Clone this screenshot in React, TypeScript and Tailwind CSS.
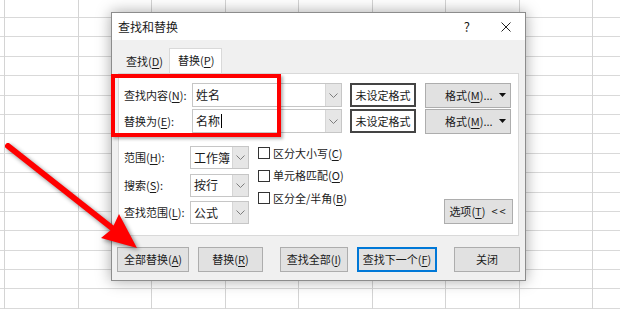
import React from 'react';

const rows = Array.from({ length: 15 }, (_, i) => i);
const cols = Array.from({ length: 8 }, (_, i) => i);

const Chevron = () => (
  <svg width="9" height="5" viewBox="0 0 9 5">
    <polyline points="0.5,0.5 4.5,4.5 8.5,0.5" fill="none" stroke="#7d7d7d" strokeWidth="1" />
  </svg>
);

const Key = ({ k }: { k: string }) => (
  <>
    (<u className="underline-offset-2">{k}</u>)
  </>
);

interface ComboProps {
  text: string;
  width: string;
  height: string;
  cursor?: boolean;
}

const Combo = ({ text, width, height, cursor }: ComboProps) => (
  <div className={`flex border border-[#c6c6c6] bg-white ${width} ${height}`}>
    <div className="flex-1 flex items-center pl-[3px] text-[12px]">
      {text}
      {cursor && <span className="ml-px w-px h-[14px] bg-black" />}
    </div>
    <div className="w-[16px] bg-[#e6e6e6] border-l border-[#d6d6d6] flex items-center justify-center">
      <Chevron />
    </div>
  </div>
);

const Btn = ({ children, className }: { children: React.ReactNode; className: string }) => (
  <div className={`h-[25px] flex items-center justify-center whitespace-nowrap border border-[#adadad] bg-[#e1e1e1] ${className}`}>
    {children}
  </div>
);

const Check = ({ children }: { children: React.ReactNode }) => (
  <div className="h-[22.5px] flex items-center whitespace-nowrap">
    <span className="w-[12px] h-[12px] border border-[#333] bg-white" />
    <span className="ml-[3px]">{children}</span>
  </div>
);

export default function App() {
  return (
    <div className="relative w-[620px] h-[309px] overflow-hidden bg-white font-['Noto_Sans_CJK_SC',sans-serif] text-[11px] leading-none text-[#1a1a1a]">
      {/* sheet grid */}
      <div className="absolute inset-0 flex flex-col">
        <div className="h-[18px] shrink-0 border-b border-[#d9d9d9]" />
        {rows.map((i) => (
          <div key={i} className="h-[19.4px] shrink-0 border-b border-[#d9d9d9]" />
        ))}
      </div>
      <div className="absolute inset-0 flex">
        <div className="w-[5px] shrink-0 border-r border-[#d4d4d4]" />
        {cols.map((i) => (
          <div key={i} className="w-[73.5px] shrink-0 border-r border-[#d4d4d4]" />
        ))}
      </div>

      {/* dialog */}
      <div className="absolute left-[111px] top-[12px] w-[415px] h-[269px] flex flex-col border border-[#8c8c8c] bg-[#f0f0f0] shadow-[0_0_14px_rgba(0,0,0,0.35)]">
        <div className="h-[27px] bg-white flex items-center pl-[6px] pr-[14px] text-[12px]">
          <span>查找和替换</span>
          <span className="ml-auto text-[13px]">?</span>
          <svg className="ml-[31px]" width="10" height="10" viewBox="0 0 10 10">
            <path d="M0.5 0.5 L9.5 9.5 M9.5 0.5 L0.5 9.5" stroke="#222" strokeWidth="1" />
          </svg>
        </div>

        <div className="flex mt-[8px] pl-[7px] h-[25px] whitespace-nowrap">
          <div className="w-[50px] pl-[7px] pt-[8px]">
            查找<Key k="D" />
          </div>
          <div className="w-[53px] pl-[8px] pt-[6px] bg-white border border-b-0 border-[#d9d9d9]">
            替换<Key k="P" />
          </div>
        </div>

        <div className="mx-[6px] h-[163px] flex flex-col border border-[#d9d9d9] bg-white pl-[5px] pt-[9px]">
          <div className="flex items-center h-[24px]">
            <span className="w-[68px] whitespace-nowrap">
              查找内容<Key k="N" />:
            </span>
            <Combo text="姓名" width="w-[150px]" height="h-[24px]" />
            <div className="ml-[8px] w-[66px] h-[24px] flex items-center justify-center border-2 border-[#444] bg-white">
              未设定格式
            </div>
            <Btn className="ml-[9px] w-[86px] !justify-start pl-[19px] pr-[4px] h-[22px]">
              <span>
                格式<Key k="M" />...
              </span>
              <svg className="ml-auto" width="7" height="4" viewBox="0 0 7 4">
                <polygon points="0,0 7,0 3.5,4" fill="#111" />
              </svg>
            </Btn>
          </div>
          <div className="flex items-center h-[24px] mt-[2px]">
            <span className="w-[68px] whitespace-nowrap">
              替换为<Key k="E" />:
            </span>
            <Combo text="名称" width="w-[150px]" height="h-[24px]" cursor />
            <div className="ml-[8px] w-[66px] h-[24px] flex items-center justify-center border-2 border-[#444] bg-white">
              未设定格式
            </div>
            <Btn className="ml-[9px] w-[86px] !justify-start pl-[19px] pr-[4px] h-[22px]">
              <span>
                格式<Key k="M" />...
              </span>
              <svg className="ml-auto" width="7" height="4" viewBox="0 0 7 4">
                <polygon points="0,0 7,0 3.5,4" fill="#111" />
              </svg>
            </Btn>
          </div>

          <div className="flex mt-[9px] pr-[5px]">
            <div className="flex flex-col gap-[4.5px] mt-[4px] whitespace-nowrap">
              <div className="flex items-center h-[23px]">
                <span className="w-[66px]">
                  范围<Key k="H" />:
                </span>
                <Combo text="工作簿" width="w-[59px]" height="h-[23px]" />
              </div>
              <div className="flex items-center h-[23px]">
                <span className="w-[66px]">
                  搜索<Key k="S" />:
                </span>
                <Combo text="按行" width="w-[59px]" height="h-[23px]" />
              </div>
              <div className="flex items-center h-[23px]">
                <span className="w-[66px]">
                  查找范围<Key k="L" />:
                </span>
                <Combo text="公式" width="w-[59px]" height="h-[23px]" />
              </div>
            </div>
            <div className="flex flex-col ml-[9px]">
              <Check>
                区分大小写<Key k="C" />
              </Check>
              <Check>
                单元格匹配<Key k="O" />
              </Check>
              <Check>
                区分全/半角<Key k="B" />
              </Check>
            </div>
            <Btn className="ml-auto self-end w-[69px]">
              <span>
                选项<Key k="T" />
              </span>
              <span className="ml-[6px] tracking-[2px]">&lt;&lt;</span>
            </Btn>
          </div>
        </div>

        <div className="flex mt-[11px] pl-[5px]">
          <Btn className="w-[72px]">
            全部替换<Key k="A" />
          </Btn>
          <Btn className="ml-[9px] w-[65px]">
            替换<Key k="R" />
          </Btn>
          <Btn className="ml-[17px] w-[68px]">
            查找全部<Key k="I" />
          </Btn>
          <Btn className="ml-[9px] w-[80px] border-2 !border-[#0078d7]">
            查找下一个<Key k="F" />
          </Btn>
          <Btn className="ml-[17px] w-[66px]">关闭</Btn>
        </div>
      </div>

      {/* red highlight */}
      <div className="absolute left-[111px] top-[74px] w-[170px] h-[63px] border-4 border-[#ff0000] shadow-[2px_2px_3px_rgba(0,0,0,0.3)]" />

      {/* arrow */}
      <svg
        className="absolute inset-0 pointer-events-none drop-shadow-[2px_2px_2px_rgba(0,0,0,0.45)]"
        width="620"
        height="309"
        viewBox="0 0 620 309"
      >
        <line x1="8" y1="146" x2="112" y2="228" stroke="#ff0000" strokeWidth="6" strokeLinecap="round" />
        <polygon points="137,248 101,238 112,229 119,214" fill="#ff0000" />
      </svg>
    </div>
  );
}
